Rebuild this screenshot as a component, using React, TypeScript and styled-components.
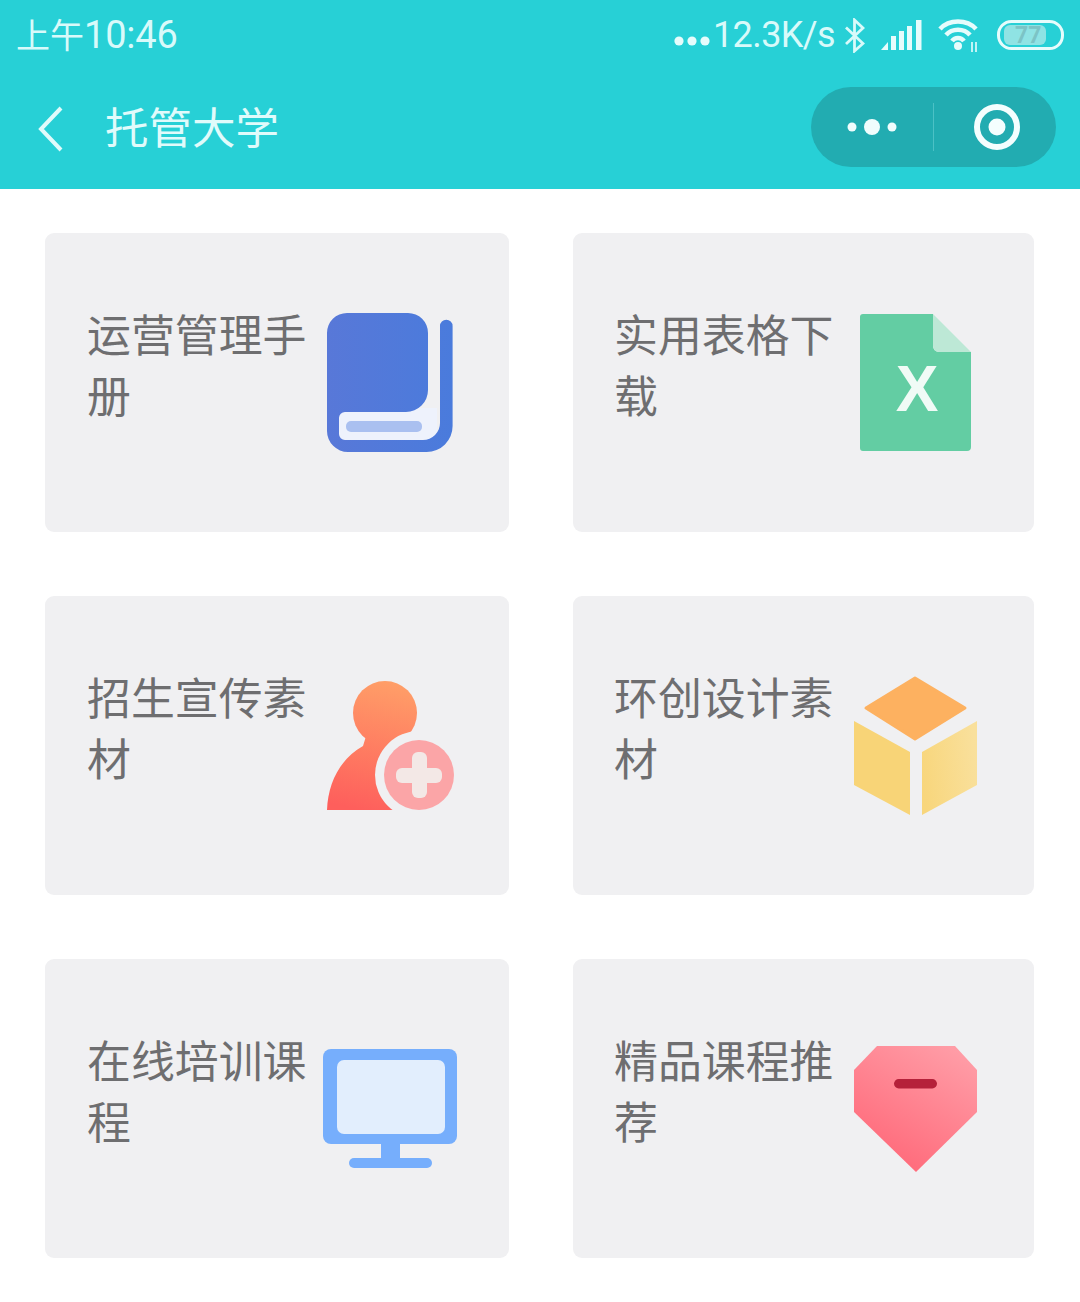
import styled, { createGlobalStyle } from 'styled-components';

const GlobalStyle = createGlobalStyle`
  html, body {
    margin: 0;
    padding: 0;
    background: #fff;
  }
  body {
    font-family: 'Roboto', 'Noto Sans CJK SC', sans-serif;
  }
`;

const Page = styled.div`
  width: 1080px;
  height: 1302px;
  overflow: hidden;
  background: #fff;
`;

const Header = styled.header`
  height: 189px;
  background: #27d0d6;
  color: #d8fafa;
`;

const StatusBar = styled.div`
  display: flex;
  align-items: center;
  height: 70px;
  padding: 0 16px 0 16px;
  box-sizing: border-box;
`;

const Time = styled.span`
  font-family: 'Roboto', 'Noto Sans CJK SC', sans-serif;
  font-size: 38px;
  letter-spacing: -0.2px;
  line-height: 70px;
`;

const TimePrefix = styled.span`
  font-size: 34px;
  letter-spacing: 0;
`;

const StatusRight = styled.div`
  display: flex;
  align-items: center;
  margin-left: auto;
`;

const Speed = styled.span`
  font-size: 36px;
  letter-spacing: -0.6px;
  line-height: 70px;
  margin: 0 9px 0 3px;
`;

const StatusIcon = styled.svg<{ $gap?: number }>`
  display: block;
  flex: none;
  margin-right: ${(p) => p.$gap ?? 0}px;
`;

const Dots = styled(StatusIcon)`
  margin-top: 12px;
`;

const NavBar = styled.div`
  display: flex;
  align-items: flex-start;
  height: 119px;
  padding: 17px 24px 0 38px;
  box-sizing: border-box;
`;

const BackIcon = styled.svg`
  display: block;
  flex: none;
  margin-top: 19px;
`;

const Title = styled.h1`
  margin: -1px 0 0 41px;
  font-family: 'Noto Sans CJK SC', sans-serif;
  font-size: 43.5px;
  font-weight: 400;
  line-height: 80px;
  color: #e0fbfb;
`;

const Capsule = styled.div`
  display: flex;
  align-items: center;
  margin-left: auto;
  width: 245px;
  height: 80px;
  border-radius: 40px;
  background: #22acb1;
`;

const CapsuleHalf = styled.div`
  flex: 1;
  display: flex;
  align-items: center;
  justify-content: center;
`;

const CapsuleDivider = styled.div`
  flex: none;
  width: 1px;
  height: 48px;
  background: #4cc1c5;
`;

const RingIcon = styled.svg`
  display: block;
  margin-left: 3px;
`;

const Grid = styled.main`
  display: grid;
  grid-template-columns: 464px 461px;
  grid-auto-rows: 299px;
  column-gap: 64px;
  row-gap: 64px;
  padding: 44px 0 0 45px;
`;

const Card = styled.div<{ $inset: number }>`
  display: flex;
  align-items: flex-start;
  padding: 70px 0 0 ${(p) => p.$inset}px;
  box-sizing: border-box;
  background: #f0f0f2;
  border-radius: 9px;
`;

const CardLabel = styled.div`
  flex: none;
  width: 228px;
  font-family: 'Noto Sans CJK SC', sans-serif;
  font-size: 43.9px;
  line-height: 61px;
  color: #6e6e70;
`;

const CardIcon = styled.svg`
  display: block;
  flex: none;
  margin-top: 5px;
`;

function BookIcon() {
  return (
    <CardIcon width="150" height="150" viewBox="0 0 150 150">
      <defs>
        <linearGradient id="book" x1="0" y1="0.5" x2="1" y2="0.5">
          <stop offset="0" stopColor="#5878d8" />
          <stop offset="1" stopColor="#4a7bdc" />
        </linearGradient>
      </defs>
      <rect x="22" y="100" width="100" height="34" fill="#eef2fc" />
      <path
        fill="url(#book)"
        d="M32 5H93a20 20 0 0 1 20 20V82a22 22 0 0 1-22 22H30a6 6 0 0 0-6 6V126a6 6 0 0 0 6 6H108a17 17 0 0 0 17-17V18a6.3 6.3 0 0 1 12.6 0V118a26 26 0 0 1-26 26H33a21 21 0 0 1-21-21V25a20 20 0 0 1 20-20Z"
      />
      <rect x="31" y="113" width="76" height="11" rx="5" fill="#aac0f0" />
    </CardIcon>
  );
}

function ExcelIcon() {
  return (
    <CardIcon width="150" height="150" viewBox="0 0 150 150">
      <path
        fill="#63cda3"
        d="M21 6H91V38a6 6 0 0 0 6 6H129V139a4 4 0 0 1-4 4H21a3 3 0 0 1-3-3V9a3 3 0 0 1 3-3Z"
      />
      <path fill="#bde8d6" d="M91 6L129 44H97a6 6 0 0 1-6-6Z" />
      <text
        x="75"
        y="103"
        textAnchor="middle"
        fontFamily="'Liberation Sans', sans-serif"
        fontWeight="700"
        fontSize="64"
        fill="#f0fbf6"
      >
        X
      </text>
    </CardIcon>
  );
}

function PersonIcon() {
  return (
    <CardIcon width="150" height="150" viewBox="0 0 150 150">
      <defs>
        <linearGradient id="person" gradientUnits="userSpaceOnUse" x1="80" y1="10" x2="50" y2="140">
          <stop offset="0" stopColor="#ff9f68" />
          <stop offset="1" stopColor="#fe5f5c" />
        </linearGradient>
      </defs>
      <circle cx="70" cy="42" r="32" fill="url(#person)" />
      <path fill="url(#person)" d="M12 139C13 112 25 88 48 75L52 62H92L100 139Z" />
      <circle cx="104" cy="104" r="44" fill="#f0f0f2" />
      <circle cx="104" cy="104" r="35" fill="#fba5a7" />
      <rect x="81" y="97" width="46" height="15" rx="6" fill="#f3e8e6" />
      <rect x="97" y="81" width="15" height="46" rx="6" fill="#f3e8e6" />
    </CardIcon>
  );
}

function CubeIcon() {
  return (
    <CardIcon width="150" height="150" viewBox="0 0 150 150">
      <defs>
        <linearGradient id="cubeRight" x1="0" y1="0.6" x2="1" y2="0.4">
          <stop offset="0" stopColor="#f8d67c" />
          <stop offset="1" stopColor="#f9e09c" />
        </linearGradient>
      </defs>
      <polygon fill="#fdb160" stroke="#fdb160" strokeWidth="3" strokeLinejoin="round" points="73,7 123,37 73,68 24,37" />
      <polygon fill="#f8d477" points="12,50 68,81 68,144 12,114" />
      <polygon fill="url(#cubeRight)" points="135,50 80,81 80,144 135,114" />
    </CardIcon>
  );
}

function MonitorIcon() {
  return (
    <CardIcon width="150" height="150" viewBox="0 0 150 150">
      <rect x="8" y="15" width="134" height="95" rx="8" fill="#76aefc" />
      <rect x="22" y="26" width="108" height="74" rx="7" fill="#e2eefd" />
      <rect x="66" y="108" width="19" height="18" fill="#76aefc" />
      <rect x="34" y="124" width="83" height="10" rx="5" fill="#76aefc" />
    </CardIcon>
  );
}

function GemIcon() {
  return (
    <CardIcon width="150" height="150" viewBox="0 0 150 150">
      <defs>
        <linearGradient id="gem" x1="0.85" y1="0.05" x2="0.35" y2="0.9">
          <stop offset="0" stopColor="#ff9ca6" />
          <stop offset="1" stopColor="#ff6d7d" />
        </linearGradient>
      </defs>
      <polygon fill="url(#gem)" points="35,12 113,12 135,36 135,78 74,138 12,78 12,36" />
      <rect x="52" y="45" width="43" height="9.5" rx="4.7" fill="#b5213a" />
    </CardIcon>
  );
}

const items = [
  { lines: '运营管理手册', Icon: BookIcon },
  { lines: '实用表格下载', Icon: ExcelIcon },
  { lines: '招生宣传素材', Icon: PersonIcon },
  { lines: '环创设计素材', Icon: CubeIcon },
  { lines: '在线培训课程', Icon: MonitorIcon },
  { lines: '精品课程推荐', Icon: GemIcon },
];

export default function App() {
  return (
    <Page>
      <GlobalStyle />
      <Header>
        <StatusBar>
          <Time>
            <TimePrefix>上午</TimePrefix>10:46
          </Time>
          <StatusRight>
            <Dots width="36" height="12" viewBox="0 0 36 12">
              <circle cx="5" cy="6" r="4.6" fill="#e6fcfc" />
              <circle cx="18" cy="6" r="4.6" fill="#e6fcfc" />
              <circle cx="31" cy="6" r="4.6" fill="#e6fcfc" />
            </Dots>
            <Speed>12.3K/s</Speed>
            <StatusIcon $gap={16} width="21" height="35" viewBox="0 0 21 35">
              <path d="M2 9.5L19 25.5 10.5 33V2L19 10 2 26" fill="none" stroke="#d8fafa" strokeWidth="2.8" />
            </StatusIcon>
            <StatusIcon $gap={16} width="41" height="30" viewBox="0 0 41 30">
              <path d="M0 30L7 22V30Z M10 16h5v14h-5Z M18 11h5v19h-5Z M26 6h5v24h-5Z M35 0h5.5v30H35Z" fill="#e6fcfc" />
            </StatusIcon>
            <StatusIcon $gap={17} width="42" height="35" viewBox="0 0 42 35">
              <g fill="none" stroke="#e6fcfc" strokeWidth="4.5">
                <path d="M2 11C11 1 29 1 38 11" />
                <path d="M8 17C14 10 26 10 32 17" />
                <path d="M14 23C17 19 23 19 26 23" />
              </g>
              <circle cx="20" cy="28" r="4" fill="#e6fcfc" />
              <path d="M33 24V34H35V24Z M37 24V34H39V24Z" fill="#e6fcfc" opacity="0.8" />
            </StatusIcon>
            <StatusIcon width="67" height="30" viewBox="0 0 67 30">
              <rect x="7" y="5" width="42" height="20" rx="6" fill="#8fe3e4" />
              <rect x="1.5" y="1.5" width="64" height="27" rx="13" fill="none" stroke="#e6fcfc" strokeWidth="3" />
              <text
                x="18"
                y="23"
                fontFamily="'Roboto', sans-serif"
                fontWeight="700"
                fontSize="23"
                fill="#7cc4c6"
              >
                77
              </text>
            </StatusIcon>
          </StatusRight>
        </StatusBar>
        <NavBar>
          <BackIcon width="26" height="46" viewBox="0 0 26 46">
            <path d="M23 2L3 23 23 44" fill="none" stroke="#e0fbfb" strokeWidth="4" />
          </BackIcon>
          <Title>托管大学</Title>
          <Capsule>
            <CapsuleHalf>
              <svg width="50" height="18" viewBox="0 0 50 18">
                <circle cx="5" cy="9" r="4.5" fill="#f0fdfd" />
                <circle cx="25" cy="9" r="8" fill="#f0fdfd" />
                <circle cx="45" cy="9" r="4.5" fill="#f0fdfd" />
              </svg>
            </CapsuleHalf>
            <CapsuleDivider />
            <CapsuleHalf>
              <RingIcon width="48" height="48" viewBox="0 0 48 48">
                <circle cx="24" cy="24" r="20" fill="none" stroke="#f4fefe" strokeWidth="6" />
                <circle cx="24" cy="24" r="8.5" fill="#f4fefe" />
              </RingIcon>
            </CapsuleHalf>
          </Capsule>
        </NavBar>
      </Header>
      <Grid>
        {items.map(({ lines, Icon }, i) => (
          <Card key={lines} $inset={i % 2 === 0 ? 42 : 41}>
            <CardLabel>{lines}</CardLabel>
            <Icon />
          </Card>
        ))}
      </Grid>
    </Page>
  );
}
